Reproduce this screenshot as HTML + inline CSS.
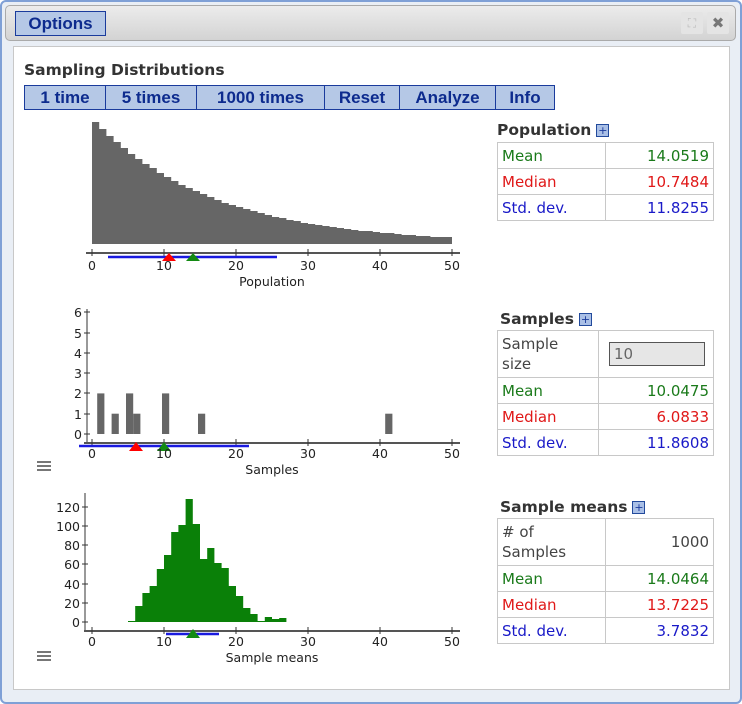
<!DOCTYPE html>
<html><head><meta charset="utf-8"><style>
*{margin:0;padding:0;box-sizing:border-box}
body{width:742px;height:704px;background:#fff;font-family:"DejaVu Sans","Liberation Sans",sans-serif;position:relative;overflow:hidden}
.abs{position:absolute}
#frame{left:0;top:0;width:742px;height:704px;background:#e9eef5;border:2px solid #7fa0d6;border-radius:6px}
#bar{left:5px;top:5px;width:731px;height:36px;border:1px solid #aaa;border-radius:5px;background:linear-gradient(#ececec,#d3d3d3)}
#panel{left:13px;top:46px;width:717px;height:644px;background:#fff;border:1px solid #c8c8c8}
.btn{position:absolute;background:#b5c8e6;border:1px solid #1a3b9c;color:#0d2b8e;font-family:"Liberation Sans",sans-serif;font-weight:bold;font-size:17px;height:25px;line-height:23px;text-align:center}
.hdr{position:absolute;font-weight:bold;font-size:15.5px;color:#333}
.plus{display:inline-block;width:13px;height:13px;border:1px solid #224a9c;background:#a9bfe6;color:#1a3b9c;font-size:11px;line-height:11px;text-align:center;vertical-align:1px;margin-left:5px;font-weight:normal}
table{position:absolute;border-collapse:collapse;font-size:15px;table-layout:fixed}
td{border:1px solid #c8c8c8;padding:0 4px;height:26px}
td.r{text-align:right}
.g{color:#1a7a1a}.rd{color:#e01818}.b{color:#1a1ac8}.k{color:#444}
.ham{position:absolute;width:14px;height:10px;border-top:2px solid #777;border-bottom:2px solid #777}
.ham:after{content:"";position:absolute;left:0;right:0;top:2px;border-top:2px solid #777}
</style></head><body>
<div id="frame" class="abs"></div>
<div id="bar" class="abs"></div>
<div class="btn" style="left:15px;top:11px;width:91px">Options</div>
<div class="abs" style="left:681px;top:12px;width:22px;height:22px;background:#e4e4e4;border-radius:2px;color:#bbb;font-size:12px;text-align:center;line-height:22px">⛶</div>
<div class="abs" style="left:707px;top:12px;width:22px;height:22px;background:#e4e4e4;border-radius:2px;color:#777;font-size:15px;font-weight:bold;text-align:center;line-height:22px">✖</div>
<div id="panel" class="abs"></div>
<div class="hdr" style="left:24px;top:61px;font-size:15.5px">Sampling Distributions</div>
<div class="btn" style="left:24px;top:85px;width:82px">1 time</div>
<div class="btn" style="left:105px;top:85px;width:92px">5 times</div>
<div class="btn" style="left:196px;top:85px;width:129px">1000 times</div>
<div class="btn" style="left:324px;top:85px;width:76px">Reset</div>
<div class="btn" style="left:399px;top:85px;width:97px">Analyze</div>
<div class="btn" style="left:495px;top:85px;width:60px">Info</div>

<svg class="abs" style="left:0;top:0" width="742" height="704" font-family="DejaVu Sans,sans-serif" font-size="12.5" fill="#222">
<path fill="#666" d="M92 244V122H99.2V129H106.4V136H113.6V142H120.8V148H128V154H135.2V159H142.4V164H149.6V168H156.8V173H164V177H171.2V181H178.4V185H185.6V188H192.8V191H200V194H207.2V197H214.4V200H221.6V203H228.8V205H236V207H243.2V209H250.4V211H257.6V213H264.8V215H272V217H279.2V218H286.4V220H293.6V221H300.8V223H308V224H315.2V225H322.4V226H329.6V227H336.8V228H344V229H351.2V230H358.4V231H372.8V232H380V233H394.4V234H401.6V235H416V236H430.4V237H452V244Z"/>
<g stroke="#555" stroke-width="2"><line x1="86" y1="253" x2="460" y2="253"/></g>
<g stroke="#333" stroke-width="1"><line x1="92" y1="249" x2="92" y2="256"/><line x1="164" y1="249" x2="164" y2="256"/><line x1="236" y1="249" x2="236" y2="256"/><line x1="308" y1="249" x2="308" y2="256"/><line x1="380" y1="249" x2="380" y2="256"/><line x1="452" y1="249" x2="452" y2="256"/></g>
<line x1="108" y1="257" x2="277" y2="257" stroke="#1a1ae0" stroke-width="2.5"/>
<path d="M162 261L169 253L176 261Z" fill="#f00"/><path d="M186 261L193 253L200 261Z" fill="#138a13"/>
<g text-anchor="middle"><text x="92" y="270">0</text><text x="164" y="270">10</text><text x="236" y="270">20</text><text x="308" y="270">30</text><text x="380" y="270">40</text><text x="452" y="270">50</text><text x="272" y="286">Population</text></g>

<g fill="#666"><rect x="97.2" y="393.4" width="7.2" height="40.6"/><rect x="111.6" y="413.7" width="7.2" height="20.3"/><rect x="126" y="393.4" width="7.2" height="40.6"/><rect x="133.2" y="413.7" width="7.2" height="20.3"/><rect x="162" y="393.4" width="7.2" height="40.6"/><rect x="198" y="413.7" width="7.2" height="20.3"/><rect x="385.2" y="413.7" width="7.2" height="20.3"/></g>
<line x1="87" y1="309" x2="87" y2="444" stroke="#333" stroke-width="1"/>
<line x1="84" y1="443" x2="460" y2="443" stroke="#555" stroke-width="2"/>
<g stroke="#333"><line x1="84" y1="434" x2="90" y2="434"/><line x1="84" y1="414" x2="90" y2="414"/><line x1="84" y1="393" x2="90" y2="393"/><line x1="84" y1="373" x2="90" y2="373"/><line x1="84" y1="353" x2="90" y2="353"/><line x1="84" y1="333" x2="90" y2="333"/><line x1="84" y1="312" x2="90" y2="312"/>
<line x1="92" y1="439" x2="92" y2="446"/><line x1="164" y1="439" x2="164" y2="446"/><line x1="236" y1="439" x2="236" y2="446"/><line x1="308" y1="439" x2="308" y2="446"/><line x1="380" y1="439" x2="380" y2="446"/><line x1="452" y1="439" x2="452" y2="446"/></g>
<g text-anchor="end"><text x="82" y="439">0</text><text x="82" y="419">1</text><text x="82" y="398">2</text><text x="82" y="378">3</text><text x="82" y="358">4</text><text x="82" y="338">5</text><text x="82" y="317">6</text></g>
<line x1="79" y1="446" x2="249" y2="446" stroke="#1a1ae0" stroke-width="2.5"/>
<path d="M129 451L136 442L143 451Z" fill="#f00"/><path d="M157 451L164 442L171 451Z" fill="#138a13"/>
<g text-anchor="middle"><text x="92" y="458">0</text><text x="164" y="458">10</text><text x="236" y="458">20</text><text x="308" y="458">30</text><text x="380" y="458">40</text><text x="452" y="458">50</text><text x="272" y="474">Samples</text></g>

<path fill="#0a8008" d="M128 622V621H135.2V606H142.4V593H149.6V586H156.8V569H164V555H171.2V532H178.4V525H185.6V499H192.8V524H200V559H207.2V548H214.4V563H221.6V568H228.8V586H236V596H243.2V608H250.4V614H257.6V621H264.8V617H272V619H279.2V618H286.4V622Z"/>
<line x1="85" y1="493" x2="85" y2="632" stroke="#333" stroke-width="1"/>
<line x1="84" y1="631" x2="460" y2="631" stroke="#555" stroke-width="2"/>
<g stroke="#333"><line x1="82" y1="622" x2="88" y2="622"/><line x1="82" y1="603" x2="88" y2="603"/><line x1="82" y1="584" x2="88" y2="584"/><line x1="82" y1="564" x2="88" y2="564"/><line x1="82" y1="545" x2="88" y2="545"/><line x1="82" y1="526" x2="88" y2="526"/><line x1="82" y1="507" x2="88" y2="507"/>
<line x1="92" y1="627" x2="92" y2="634"/><line x1="164" y1="627" x2="164" y2="634"/><line x1="236" y1="627" x2="236" y2="634"/><line x1="308" y1="627" x2="308" y2="634"/><line x1="380" y1="627" x2="380" y2="634"/><line x1="452" y1="627" x2="452" y2="634"/></g>
<g text-anchor="end"><text x="80" y="627">0</text><text x="80" y="608">20</text><text x="80" y="589">40</text><text x="80" y="569">60</text><text x="80" y="550">80</text><text x="80" y="531">100</text><text x="80" y="512">120</text></g>
<line x1="166" y1="634" x2="219" y2="634" stroke="#1a1ae0" stroke-width="2.5"/>
<path d="M186 638L193 629L200 638Z" fill="#138a13"/>
<g text-anchor="middle"><text x="92" y="646">0</text><text x="164" y="646">10</text><text x="236" y="646">20</text><text x="308" y="646">30</text><text x="380" y="646">40</text><text x="452" y="646">50</text><text x="272" y="662">Sample means</text></g>
</svg>
<div class="ham" style="left:37px;top:461px"></div>
<div class="ham" style="left:37px;top:651px"></div>

<div class="hdr" style="left:497px;top:121px">Population<span class="plus">+</span></div>
<table style="left:497px;top:142px;width:217px">
<tr><td class="g" style="width:108px">Mean</td><td class="r g">14.0519</td></tr>
<tr><td class="rd">Median</td><td class="r rd">10.7484</td></tr>
<tr><td class="b">Std. dev.</td><td class="r b">11.8255</td></tr>
</table>

<div class="hdr" style="left:500px;top:310px">Samples<span class="plus">+</span></div>
<table style="left:497px;top:330px;width:217px">
<tr><td class="k" style="width:101px;height:47px;line-height:20px">Sample<br>size</td><td style="padding-left:10px"><div style="width:96px;height:24px;border:1px solid #555;background:#e6e6e6;color:#666;padding-left:4px;line-height:22px">10</div></td></tr>
<tr><td class="g">Mean</td><td class="r g">10.0475</td></tr>
<tr><td class="rd">Median</td><td class="r rd">6.0833</td></tr>
<tr><td class="b">Std. dev.</td><td class="r b">11.8608</td></tr>
</table>

<div class="hdr" style="left:500px;top:498px">Sample means<span class="plus">+</span></div>
<table style="left:497px;top:518px;width:217px">
<tr><td class="k" style="width:108px;height:47px;line-height:20px"># of<br>Samples</td><td class="r k">1000</td></tr>
<tr><td class="g">Mean</td><td class="r g">14.0464</td></tr>
<tr><td class="rd">Median</td><td class="r rd">13.7225</td></tr>
<tr><td class="b">Std. dev.</td><td class="r b">3.7832</td></tr>
</table>
</body></html>
